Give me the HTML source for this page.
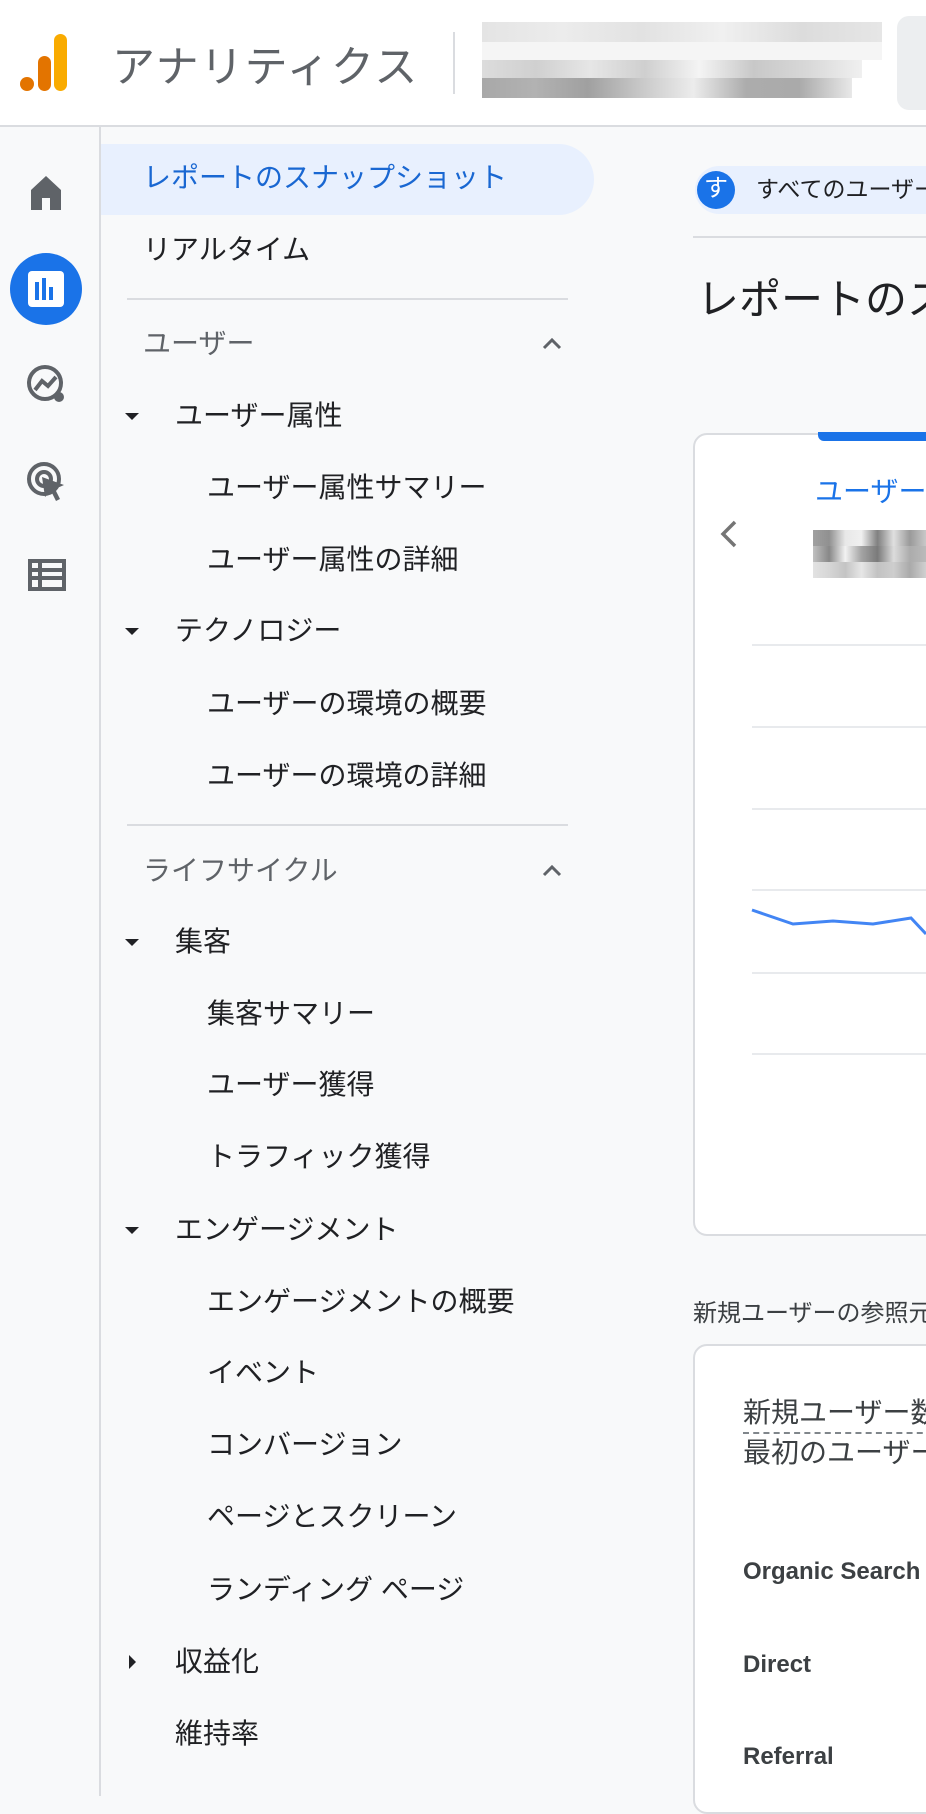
<!DOCTYPE html>
<html><head><meta charset="utf-8"><style>
*{margin:0;padding:0;box-sizing:border-box}
body{width:926px;height:1796px;overflow:hidden;background:#f8f9fa;font-family:"Liberation Sans","Noto Sans CJK JP",sans-serif;position:relative;color:#202124}
.a{position:absolute;white-space:nowrap}
.hdr{left:0;top:0;width:926px;height:127px;background:#fff;border-bottom:2px solid #dadce0}
.rail{left:0;top:127px;width:101px;height:1669px;border-right:2px solid #dadce0;background:#f8f9fa}
.n{position:absolute;font-size:28px;line-height:36px;transform:translateY(-18px);white-space:nowrap;color:#202124}
.sec{color:#5f6368}
.tri{position:absolute;width:0;height:0;border-left:7px solid transparent;border-right:7px solid transparent;border-top:7px solid #202124;left:125px}
.gl{position:absolute;left:752px;width:174px;height:2px;background:#e8eaed}
.lbl{position:absolute;left:743px;font-size:24px;font-weight:bold;color:#3c4043;transform:translateY(-14px)}
</style></head><body>
<div class="a hdr">
 <svg style="position:absolute;left:18px;top:32px" width="56" height="62"><circle cx="9" cy="52" r="7" fill="#e37400"/><rect x="20" y="24" width="13" height="35" rx="6.5" fill="#e37400"/><rect x="36" y="2" width="13" height="57" rx="6.5" fill="#f9ab00"/></svg>
 <div class="a" style="left:112px;top:33px;font-size:43px;color:#5f6368;letter-spacing:1.5px">アナリティクス</div>
 <div class="a" style="left:453px;top:32px;width:2px;height:62px;background:#dadce0"></div>
 <div class="a" style="left:482px;top:22px;width:400px;height:20px;background:linear-gradient(90deg,#e4e4e4,#ececec,#e2e2e2,#f0f0f0,#dcdcdc,#e6e6e6)"></div>
 <div class="a" style="left:482px;top:42px;width:400px;height:18px;background:#f5f5f5"></div>
 <div class="a" style="left:482px;top:60px;width:380px;height:18px;background:linear-gradient(90deg,#dcdcdc,#d0d0d0,#e6e6e6,#cfcfcf,#f4f4f4,#c8c8c8,#d8d8d8,#f0f0f0)"></div>
 <div class="a" style="left:482px;top:78px;width:370px;height:20px;background:linear-gradient(90deg,#a8a8a8,#b2b2b2,#a0a0a0,#c8c8c8,#ececec,#acacac,#aaaaaa,#e8e8e8)"></div>
 <div class="a" style="left:897px;top:16px;width:40px;height:94px;background:#eceef0;border-radius:12px"></div>
</div>
<div class="a rail">
 <svg style="position:absolute;left:29px;top:47px" width="34" height="36"><path d="M17 2 L2 16 V36 H13 V24 H21 V36 H32 V16 Z" fill="#5f6368"/></svg>
 <div style="position:absolute;left:10px;top:126px;width:72px;height:72px;border-radius:50%;background:#1a73e8"></div>
 <div style="position:absolute;left:28px;top:144px;width:36px;height:36px;border-radius:4px;background:#fff"></div>
 <div style="position:absolute;left:35px;top:155px;width:4px;height:18px;background:#1a73e8"></div>
 <div style="position:absolute;left:42px;top:151px;width:4px;height:22px;background:#1a73e8"></div>
 <div style="position:absolute;left:49px;top:160px;width:4px;height:13px;background:#1a73e8"></div>
 <svg style="position:absolute;left:26px;top:237px" width="42" height="42"><circle cx="19" cy="19" r="16" fill="none" stroke="#5f6368" stroke-width="4"/><path d="M9 26 L16 17 L22 22 L30 13" fill="none" stroke="#5f6368" stroke-width="4"/><circle cx="33" cy="33" r="5" fill="#5f6368"/></svg>
 <svg style="position:absolute;left:26px;top:334px" width="42" height="42"><circle cx="18" cy="18" r="15" fill="none" stroke="#5f6368" stroke-width="4"/><circle cx="18" cy="18" r="7" fill="none" stroke="#5f6368" stroke-width="4"/><path d="M16 16 L38 24 L29 28 L34 38 L30 40 L25 30 L19 36 Z" fill="#5f6368"/></svg>
 <svg style="position:absolute;left:28px;top:432px" width="38" height="32"><rect x="2" y="2" width="34" height="28" fill="none" stroke="#5f6368" stroke-width="4"/><path d="M2 11H36M2 19H36M12 2V30" stroke="#5f6368" stroke-width="4"/></svg>
</div>
<div class="a" style="left:101px;top:144px;width:493px;height:71px;background:#e8f0fe;border-radius:0 36px 36px 0"></div>
<div class="n" style="left:143px;top:178px;color:#1967d2">レポートのスナップショット</div>
<div class="n" style="left:143px;top:250px">リアルタイム</div>
<div class="a" style="left:127px;top:298px;width:441px;height:2px;background:#dadce0"></div>
<div class="n sec" style="left:143px;top:344px">ユーザー</div>
<svg class="a" style="left:541px;top:336px" width="22" height="14"><path d="M3 12 L11 4 L19 12" fill="none" stroke="#5f6368" stroke-width="3"/></svg>
<div class="tri" style="top:413px"></div><div class="n" style="left:175px;top:416px">ユーザー属性</div>
<div class="n" style="left:207px;top:488px">ユーザー属性サマリー</div>
<div class="n" style="left:207px;top:560px">ユーザー属性の詳細</div>
<div class="tri" style="top:628px"></div><div class="n" style="left:175px;top:631px">テクノロジー</div>
<div class="n" style="left:207px;top:704px">ユーザーの環境の概要</div>
<div class="n" style="left:207px;top:776px">ユーザーの環境の詳細</div>
<div class="a" style="left:127px;top:824px;width:441px;height:2px;background:#dadce0"></div>
<div class="n sec" style="left:143px;top:871px">ライフサイクル</div>
<svg class="a" style="left:541px;top:863px" width="22" height="14"><path d="M3 12 L11 4 L19 12" fill="none" stroke="#5f6368" stroke-width="3"/></svg>
<div class="tri" style="top:939px"></div><div class="n" style="left:175px;top:942px">集客</div>
<div class="n" style="left:207px;top:1014px">集客サマリー</div>
<div class="n" style="left:207px;top:1085px">ユーザー獲得</div>
<div class="n" style="left:207px;top:1157px">トラフィック獲得</div>
<div class="tri" style="top:1227px"></div><div class="n" style="left:175px;top:1230px">エンゲージメント</div>
<div class="n" style="left:207px;top:1302px">エンゲージメントの概要</div>
<div class="n" style="left:207px;top:1373px">イベント</div>
<div class="n" style="left:207px;top:1445px">コンバージョン</div>
<div class="n" style="left:207px;top:1517px">ページとスクリーン</div>
<div class="n" style="left:207px;top:1590px">ランディング ページ</div>
<div class="a" style="left:129px;top:1655px;width:0;height:0;border-top:7px solid transparent;border-bottom:7px solid transparent;border-left:7px solid #202124"></div>
<div class="n" style="left:175px;top:1662px">収益化</div>
<div class="n" style="left:175px;top:1734px">維持率</div>

<div class="a" style="left:695px;top:166px;width:260px;height:48px;border-radius:24px;background:#e8f0fe"></div>
<div class="a" style="left:697px;top:171px;width:38px;height:38px;border-radius:50%;background:#1a73e8;color:#fff;font-size:24px;line-height:36px;text-align:center">す</div>
<div class="a" style="left:756px;top:174px;font-size:23px;line-height:30px;color:#202124">すべてのユーザー</div>
<div class="a" style="left:693px;top:236px;width:233px;height:2px;background:#dadce0"></div>
<div class="a" style="left:697px;top:274px;font-size:42px;line-height:52px;color:#202124">レポートのス</div>

<div class="a" style="left:693px;top:433px;width:260px;height:803px;background:#fff;border:2px solid #dadce0;border-radius:14px"></div>
<div class="a" style="left:818px;top:432px;width:120px;height:9px;background:#1a73e8;border-radius:0 0 6px 6px"></div>
<div class="a" style="left:815px;top:474px;font-size:28px;line-height:36px;color:#1a73e8">ユーザー</div>
<svg class="a" style="left:718px;top:519px" width="22" height="30"><path d="M17 3 L5 15 L17 27" fill="none" stroke="#757575" stroke-width="3.5"/></svg>
<div class="a" style="left:813px;top:530px;width:113px;height:16px;background:linear-gradient(90deg,#a0a0a0,#909090,#e8e8e8,#f0f0f0,#808080,#e0e0e0,#9a9a9a,#c8c8c8)"></div>
<div class="a" style="left:813px;top:546px;width:113px;height:16px;background:linear-gradient(90deg,#c0c0c0,#888,#f2f2f2,#a4a4a4,#7a7a7a,#dcdcdc,#acacac,#bababa)"></div>
<div class="a" style="left:813px;top:562px;width:113px;height:16px;background:linear-gradient(90deg,#e2e2e2,#d6d6d6,#c4c4c4,#e6e6e6,#c2c2c2,#cecece,#aaa,#d0d0d0)"></div>
<div class="gl" style="top:644px"></div><div class="gl" style="top:726px"></div><div class="gl" style="top:808px"></div><div class="gl" style="top:889px"></div><div class="gl" style="top:972px"></div><div class="gl" style="top:1053px"></div>
<svg class="a" style="left:0;top:0" width="926" height="1796"><polyline points="752,910 793,924 833,921 873,924 911,918 926,934" fill="none" stroke="#4285f4" stroke-width="3"/></svg>

<div class="a" style="left:693px;top:1299px;font-size:24px;line-height:30px;color:#3c4043">新規ユーザーの参照元</div>
<div class="a" style="left:693px;top:1344px;width:260px;height:470px;background:#fff;border:2px solid #dadce0;border-radius:14px"></div>
<div class="a" style="left:743px;top:1396px;font-size:28px;line-height:34px;color:#3c4043">新規ユーザー数</div>
<div class="a" style="left:743px;top:1432px;width:190px;border-top:2px dashed #80868b"></div>
<div class="a" style="left:743px;top:1436px;font-size:28px;line-height:34px;color:#3c4043">最初のユーザー</div>
<div class="lbl" style="top:1572px">Organic Search</div>
<div class="lbl" style="top:1665px">Direct</div>
<div class="lbl" style="top:1757px">Referral</div>
</body></html>
